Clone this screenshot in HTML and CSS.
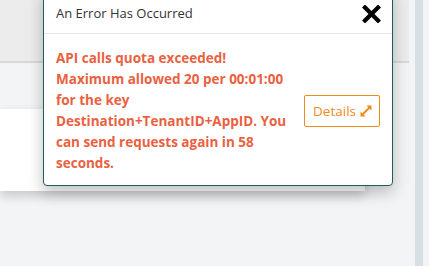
FILE: index.html
```html
<!DOCTYPE html>
<html>
<head>
<meta charset="utf-8">
<link rel="stylesheet" href="styles.css">
</head>
<body>
<div class="page">
  <div class="main">
    <div class="topbar"></div>
    <div class="card"></div>
  </div>
  <div class="strip"></div>
  <div class="edge"></div>

  <div class="dialog">
    <div class="dialog-header">
      <span class="title">An Error Has Occurred</span>
      <svg class="close" width="19" height="18" viewBox="0 0 19 18"><path d="M3 2.5 L16 15.5 M16 2.5 L3 15.5" stroke="#000" stroke-width="4.2" stroke-linecap="square" fill="none"/></svg>
    </div>
    <div class="dialog-body">
      <p class="message">API calls quota exceeded! Maximum allowed 20 per 00:01:00 for the key Destination+TenantID+AppID. You can send requests again in 58 seconds.</p>
      <button class="details">Details <svg class="expand" width="12" height="12" viewBox="0 0 12 12"><path d="M6.5 0.5 H11.5 V5.5 Z M0.5 6.5 V11.5 H5.5 Z" fill="#f08a1c"/><path d="M9.5 2.5 L2.5 9.5" stroke="#f08a1c" stroke-width="2"/></svg></button>
    </div>
  </div>
</div>
</body>
</html>
```
FILE: styles.css
```css
html, body {
  margin: 0;
  padding: 0;
}
body {
  width: 429px;
  height: 266px;
  overflow: hidden;
  background: #f3f4f6;
  font-family: "Open Sans", "Segoe UI", sans-serif;
}
.page {
  position: relative;
  display: flex;
  height: 266px;
}
.main {
  width: 415px;
  display: flex;
  flex-direction: column;
}
.topbar {
  width: 409px;
  height: 61px;
  background: #ececec;
  border-bottom: 2px solid #d9d9d9;
}
.card {
  margin-top: 46px;
  width: 365px;
  height: 82px;
  background: #fff;
  box-shadow: 0 5px 10px rgba(0, 0, 0, 0.18);
}
.strip {
  width: 8px;
  background: #d8dfe3;
}
.edge {
  flex: 1;
  background: #f3f4f6;
}
.dialog {
  position: absolute;
  left: 43px;
  top: -10px;
  width: 348px;
  background: #fff;
  border: 1px solid #1c5e60;
  border-radius: 4px;
  box-shadow: 0 6px 16px rgba(0, 0, 0, 0.25);
}
.dialog-header {
  display: flex;
  align-items: center;
  justify-content: space-between;
  height: 43px;
  padding: 1px 11px 0 12px;
  border-bottom: 1px solid #eaeaea;
  box-sizing: border-box;
}
.title {
  font-size: 13px;
  color: #333;
}
.close {
  display: block;
  margin-top: 2px;
}
.dialog-body {
  display: flex;
  align-items: center;
  justify-content: space-between;
  padding: 14px 12px 11px 12px;
}
.message {
  margin: 0;
  width: 236px;
  font-size: 13.5px;
  font-weight: bold;
  line-height: 21px;
  color: #ea6141;
}
.details {
  display: flex;
  align-items: center;
  gap: 4px;
  height: 32px;
  padding: 0 7px 0 8px;
  background: #fff;
  border: 1px solid #f08a1c;
  border-radius: 2px;
  color: #f08a1c;
  font-family: "Open Sans", "Segoe UI", sans-serif;
  font-size: 13.5px;
}
.expand {
  display: block;
}
```
